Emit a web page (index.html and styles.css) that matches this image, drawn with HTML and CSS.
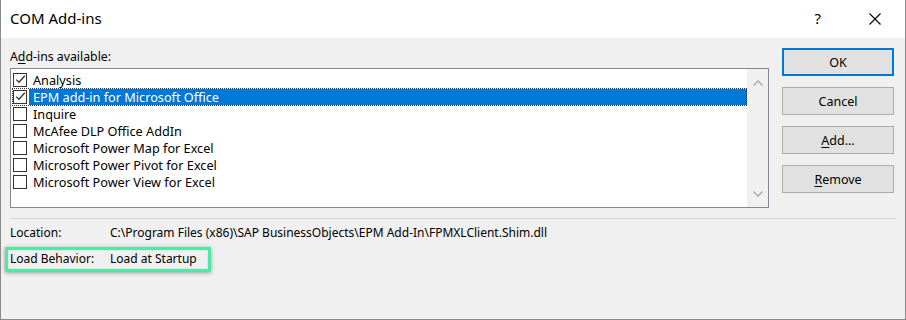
FILE: index.html
```html
<!DOCTYPE html>
<html>
<head>
<meta charset="utf-8">
<link rel="stylesheet" href="styles.css">
</head>
<body>
<div class="window">
  <div class="titlebar">
    <span class="title">COM Add-ins</span>
    <span class="help">?</span>
    <svg class="close" width="12" height="12" viewBox="0 0 12 12"><path d="M0.5 0.5L11.5 11.5M11.5 0.5L0.5 11.5" stroke="#000" stroke-width="1.1" fill="none"/></svg>
  </div>
  <div class="body">
    <div class="main">
      <div class="left">
        <div class="label">A<u>d</u>d-ins available:</div>
        <div class="listbox">
          <ul class="items">
            <li class="item"><span class="check on"><svg width="11" height="11" viewBox="0 0 11 11"><path d="M1.3 5.6L4 8.3L9.8 1.8" stroke="#333" stroke-width="1.3" fill="none"/></svg></span><span class="text">Analysis</span></li>
            <li class="item focus"><span class="check on"><svg width="11" height="11" viewBox="0 0 11 11"><path d="M1.3 5.6L4 8.3L9.8 1.8" stroke="#333" stroke-width="1.3" fill="none"/></svg></span><span class="text sel">EPM add-in for Microsoft Office</span></li>
            <li class="item"><span class="check"></span><span class="text">Inquire</span></li>
            <li class="item"><span class="check"></span><span class="text">McAfee DLP Office AddIn</span></li>
            <li class="item"><span class="check"></span><span class="text">Microsoft Power Map for Excel</span></li>
            <li class="item"><span class="check"></span><span class="text">Microsoft Power Pivot for Excel</span></li>
            <li class="item"><span class="check"></span><span class="text">Microsoft Power View for Excel</span></li>
          </ul>
          <div class="scrollbar">
            <svg width="10" height="6" viewBox="0 0 10 6"><path d="M0.5 5.5L5 1L9.5 5.5" stroke="#a6a6a6" stroke-width="1.3" fill="none"/></svg>
            <svg width="10" height="6" viewBox="0 0 10 6"><path d="M0.5 0.5L5 5L9.5 0.5" stroke="#a6a6a6" stroke-width="1.3" fill="none"/></svg>
          </div>
        </div>
      </div>
      <div class="buttons">
        <div class="btn default">OK</div>
        <div class="btn">Cancel</div>
        <div class="btn"><u>A</u>dd...</div>
        <div class="btn"><u>R</u>emove</div>
      </div>
    </div>
    <div class="sep"></div>
    <div class="info">
      <div class="row"><span class="key">Location:</span><span class="val">C:\Program Files (x86)\SAP BusinessObjects\EPM Add-In\FPMXLClient.Shim.dll</span></div>
      <div class="row"><span class="key">Load Behavior:</span><span class="val">Load at Startup</span></div>
      <div class="highlight"></div>
    </div>
  </div>
</div>
</body>
</html>
```
FILE: styles.css
```css
* { box-sizing: border-box; }
html, body { margin: 0; padding: 0; }
body {
  width: 906px;
  height: 320px;
  overflow: hidden;
  font-family: "Noto Sans", "Open Sans", sans-serif;
  font-size: 12px;
  color: #000;
}
.window {
  width: 906px;
  height: 320px;
  border: 1px solid #8a8a8a;
  border-top: none;
  background: #f0f0f0;
  display: flex;
  flex-direction: column;
}
.titlebar {
  height: 38px;
  background: #fff;
  display: flex;
  align-items: center;
  padding-left: 9px;
  flex-shrink: 0;
}
.title {
  font-size: 15px;
  flex: 1;
  padding-bottom: 2px;
}
.help {
  font-size: 15px;
  margin-right: 48px;
  padding-bottom: 2px;
}
.close { margin-right: 24px; margin-bottom: 1px; }
.body {
  flex: 1;
  position: relative;
  padding: 0 9px 0 9px;
}
.main {
  display: flex;
  justify-content: space-between;
}
.left { width: 759px; }
.label {
  height: 30px;
  line-height: 16px;
  padding-top: 11px;
  font-size: 12.3px;
}
.label u, .btn u { text-decoration-thickness: 1px; text-underline-offset: 2px; }
.listbox {
  height: 140px;
  border: 1px solid #828790;
  background: #fff;
  display: flex;
}
.items {
  list-style: none;
  margin: 0;
  padding: 2px 0 0 0;
  flex: 1;
  font-size: 12.7px;
}
.item {
  height: 17px;
  display: flex;
  align-items: center;
  padding-left: 2px;
  position: relative;
}
.item.focus::after {
  content: "";
  position: absolute;
  left: 1px; top: 0; right: 0; bottom: -1px;
  border: 1px dotted #333;
  pointer-events: none;
}
.check {
  width: 14px;
  height: 14px;
  border: 1px solid #333;
  background: #fff;
  display: flex;
  align-items: center;
  justify-content: center;
  flex-shrink: 0;
}
.text {
  margin-left: 2px;
  padding-left: 4px;
  height: 16px;
  line-height: 16px;
  flex: 1;
  white-space: nowrap;
}
.text.sel {
  background: #0078d7;
  color: #fff;
}
.scrollbar {
  width: 21px;
  background: #f0f0f0;
  display: flex;
  flex-direction: column;
  justify-content: space-between;
  align-items: center;
  padding: 11px 0 10px 0;
}
.buttons {
  display: flex;
  flex-direction: column;
  gap: 11px;
  padding-top: 10px;
  margin-right: 2px;
}
.btn {
  width: 112px;
  height: 28px;
  background: #e1e1e1;
  border: 1px solid #adadad;
  display: flex;
  align-items: center;
  justify-content: center;
  font-size: 12.5px;
}
.btn.default {
  border: 2px solid #0078d7;
}
.sep {
  height: 1px;
  background: #d7d7d7;
  margin-top: 10px;
  margin-right: 0;
}
.info {
  position: relative;
  padding-top: 6px;
  display: flex;
  flex-direction: column;
  gap: 10px;
}
.row {
  display: flex;
  height: 16px;
  line-height: 16px;
}
.key { width: 100px; }
.highlight {
  position: absolute;
  left: -5px;
  top: 28px;
  width: 206px;
  height: 25px;
  border: 3px solid #4fe8a4;
  box-shadow: 0 1px 4px rgba(0,0,0,0.35), inset 0 0 2px rgba(0,0,0,0.15);
  pointer-events: none;
}
```
